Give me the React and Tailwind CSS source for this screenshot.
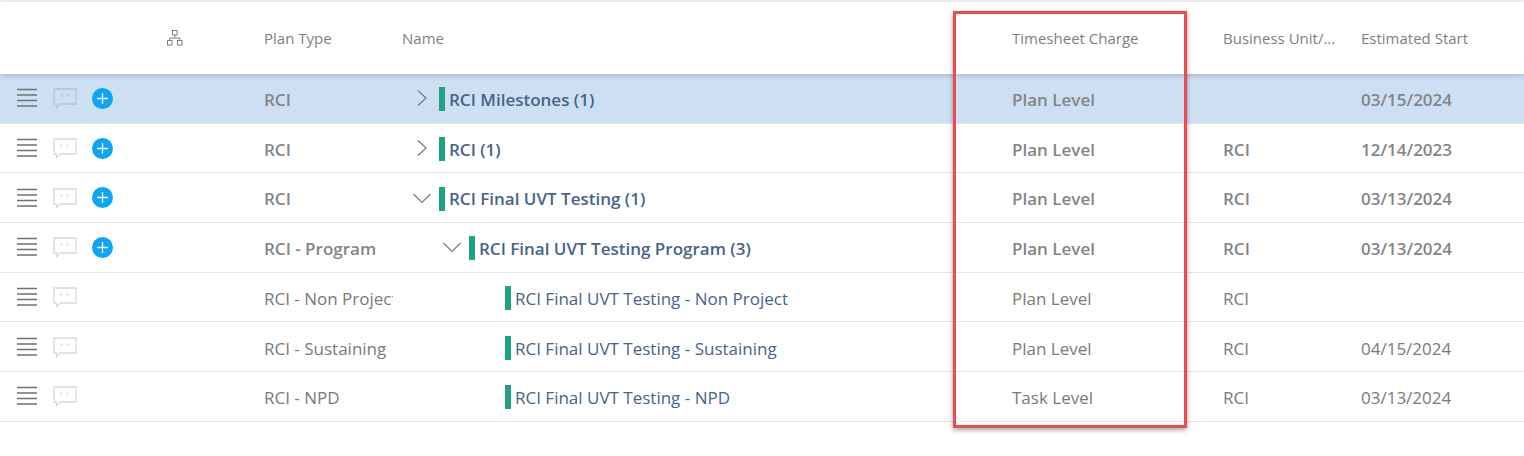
import { Plus } from 'lucide-react'

const rows = [
  { type: 'RCI', name: 'RCI Milestones (1)', charge: 'Plan Level', unit: '', start: '03/15/2024', add: true, bold: true, chevron: 'right', indent: 'pl-[3px]', selected: true },
  { type: 'RCI', name: 'RCI (1)', charge: 'Plan Level', unit: 'RCI', start: '12/14/2023', add: true, bold: true, chevron: 'right', indent: 'pl-[3px]' },
  { type: 'RCI', name: 'RCI Final UVT Testing (1)', charge: 'Plan Level', unit: 'RCI', start: '03/13/2024', add: true, bold: true, chevron: 'down', indent: 'pl-[3px]' },
  { type: 'RCI - Program', name: 'RCI Final UVT Testing Program (3)', charge: 'Plan Level', unit: 'RCI', start: '03/13/2024', add: true, bold: true, chevron: 'down', indent: 'pl-[33px]' },
  { type: 'RCI - Non Project', name: 'RCI Final UVT Testing - Non Project', charge: 'Plan Level', unit: 'RCI', start: '', indent: 'pl-[103px]' },
  { type: 'RCI - Sustaining', name: 'RCI Final UVT Testing - Sustaining', charge: 'Plan Level', unit: 'RCI', start: '04/15/2024', indent: 'pl-[103px]' },
  { type: 'RCI - NPD', name: 'RCI Final UVT Testing - NPD', charge: 'Task Level', unit: 'RCI', start: '03/13/2024', indent: 'pl-[103px]' },
]

const columns = 'grid grid-cols-[264px_138px_610px_211px_138px_1fr] items-center'

function HierarchyIcon() {
  return (
    <svg width="18" height="18" viewBox="0 0 18 18" fill="none" stroke="#7b7f86" strokeWidth="1">
      <rect x="6.5" y="1.5" width="4.5" height="4.5" />
      <rect x="1.5" y="11.5" width="4.5" height="4.5" />
      <rect x="11.5" y="11.5" width="4.5" height="4.5" />
      <path d="M8.75 6v3M3.75 11.5V9h10v2.5" />
    </svg>
  )
}

function MenuIcon() {
  return (
    <svg width="20" height="20" viewBox="0 0 20 20" stroke="#6f7276" strokeWidth="1.6">
      <path d="M0 1.5h20M0 7h20M0 12.5h20M0 18h20" />
    </svg>
  )
}

function CommentIcon({ selected }) {
  return (
    <svg width="24" height="21" viewBox="0 0 24 21" fill="none" stroke={selected ? '#b4c4d6' : '#d9d9d9'} strokeWidth="1.3">
      <path d="M1 1h22v15H7.5L3.5 19.5V16H1z" />
      <path d="M8.5 6.5v2M14.5 6.5v2" strokeWidth="2" />
    </svg>
  )
}

function Chevron({ dir }) {
  if (dir === 'right') {
    return (
      <svg width="14" height="20" viewBox="0 0 14 20" fill="none" stroke="#777b80" strokeWidth="1.2">
        <path d="M3 2.5 11 10 3 17.5" />
      </svg>
    )
  }
  return (
    <svg width="20" height="14" viewBox="0 0 20 14" fill="none" stroke="#777b80" strokeWidth="1.2">
      <path d="M1.5 3 10 11.5 18.5 3" />
    </svg>
  )
}

function Row({ row }) {
  const weight = row.bold ? 'font-semibold text-[#858585]' : ''
  return (
    <div className={`${columns} h-[49.7px] border-b border-[#e6e6e6] text-[17px] text-[#7a7a7a] ${row.selected ? 'bg-[#cde0f3] border-[#cde0f3]' : 'bg-white'}`}>
      <div className="flex items-center pl-[17px]">
        <MenuIcon />
        <div className="ml-[16px] mt-px flex">
          <CommentIcon selected={row.selected} />
        </div>
        {row.add && (
          <div className="ml-[15px] flex h-[21px] w-[21px] items-center justify-center rounded-full bg-[#0ea5f2]">
            <Plus size={17} color="white" strokeWidth={1.8} />
          </div>
        )}
      </div>
      <div className={`w-[129px] overflow-hidden whitespace-nowrap pt-[3px] ${weight}`}>{row.type}</div>
      <div className={`flex items-center ${row.indent}`}>
        {row.chevron && (
          <div className="flex w-[34px] shrink-0 justify-center">
            <Chevron dir={row.chevron} />
          </div>
        )}
        <div className="mt-[2px] h-[24px] w-[6px] shrink-0 bg-[#1fa284]" />
        <div className={`ml-[4px] whitespace-nowrap pt-[3px] text-[#47648a] ${row.bold ? 'font-semibold' : ''}`}>{row.name}</div>
      </div>
      <div className={`pt-[3px] ${weight}`}>{row.charge}</div>
      <div className={`pt-[3px] ${weight}`}>{row.unit}</div>
      <div className={`pt-[3px] ${weight}`}>{row.start}</div>
    </div>
  )
}

export default function App() {
  return (
    <div className="relative h-[456px] w-[1524px] overflow-hidden bg-white font-['Open_Sans',sans-serif]">
      <div className="h-[2px] bg-[#efefef]" />
      <div className={`${columns} relative z-10 h-[72px] bg-white text-[15px] text-[#7f7f7f] shadow-[0_2px_5px_rgba(0,0,0,0.16)]`}>
        <div className="flex pl-[166px]">
          <HierarchyIcon />
        </div>
        <div>Plan Type</div>
        <div>Name</div>
        <div>Timesheet Charge</div>
        <div>Business Unit/...</div>
        <div>Estimated Start</div>
      </div>
      {rows.map((row) => (
        <Row key={row.name} row={row} />
      ))}
      <div className="absolute left-[953px] top-[11px] z-20 h-[417px] w-[234px] border-[3px] border-[#ee4b50] shadow-[0_2px_5px_rgba(0,0,0,0.35)]" />
    </div>
  )
}
